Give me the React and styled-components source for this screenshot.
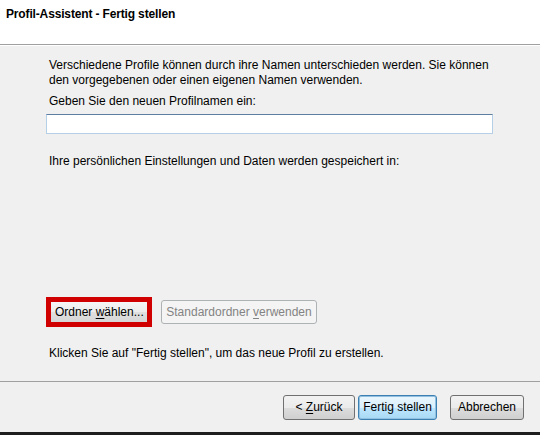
import React from 'react';
import styled, { createGlobalStyle, css } from 'styled-components';

const GlobalStyle = createGlobalStyle`
	html, body {
		margin: 0;
		padding: 0;
		background: #f0f0f0;
	}
	body {
		font-family: 'Liberation Sans', Arial, sans-serif;
		font-size: 12px;
		color: #000;
	}
`;

const Wizard = styled.div`
	width: 540px;
	height: 435px;
	display: flex;
	flex-direction: column;
	background: #f0f0f0;
	overflow: hidden;
`;

const Header = styled.div`
	height: 45px;
	flex-shrink: 0;
	background: #fff;
	border-bottom: 1px solid #a0a0a0;
	padding: 7px 0 0 6px;
	box-sizing: border-box;
`;

const Title = styled.div`
	font-weight: bold;
	line-height: 15px;
	letter-spacing: -0.15px;
`;

const Body = styled.div`
	flex: 1;
	display: flex;
	flex-direction: column;
	padding: 12px 48px 20px 49px;
	border-top: 1px solid #fff;
	box-sizing: border-box;
`;

const Text = styled.p`
	margin: ${(p) => p.$top || 0}px 0 0;
	line-height: 15px;
`;

const NameInput = styled.input`
	margin: 5px 0 0 -3px;
	width: 447px;
	height: 20px;
	box-sizing: border-box;
	background: #fff;
	border: 1px solid #b5cfe7;
	border-top-color: #5d7e9e;
	outline: none;
	font: inherit;
	padding: 0 3px;
`;

const ButtonRow = styled.div`
	margin-top: auto;
	display: flex;
	align-items: center;
	gap: 9px;
	margin-left: -3px;
`;

const Highlight = styled.div`
	border: 5px solid #d00000;
	display: flex;
`;

const Button = styled.button`
	font: inherit;
	height: ${(p) => p.$h || 25}px;
	width: ${(p) => (p.$w ? `${p.$w}px` : 'auto')};
	padding: 0 4px;
	box-sizing: border-box;
	border-radius: 3px;
	border: 1px solid #707070;
	background: linear-gradient(#f2f2f2 0%, #ebebeb 50%, #dddddd 51%, #cfcfcf 100%);
	color: #000;
	line-height: 15px;
	white-space: nowrap;
	u {
		text-decoration: underline;
		text-underline-offset: 2px;
	}
	${(p) =>
		p.$bare &&
		css`
			border: none;
			border-radius: 0;
			background: linear-gradient(#f6f6f6 0%, #ececec 50%, #e0e0e0 51%, #d6d6d6 100%);
		`}
	${(p) =>
		p.$default &&
		css`
			border-color: #3c7fb1;
			box-shadow: inset 0 0 0 1px #92c0e0;
			background: linear-gradient(#eaf6fd 0%, #d9f0fc 50%, #bee6fd 51%, #a7d9f5 100%);
		`}
	${(p) =>
		p.disabled &&
		css`
			border-color: #adb2b5;
			background: #f4f4f4;
			color: #838383;
		`}
`;

const Footer = styled.div`
	height: 51px;
	flex-shrink: 0;
	border-top: 1px solid #a0a0a0;
	box-sizing: border-box;
	display: flex;
	align-items: flex-start;
	justify-content: flex-end;
	padding: 13px 16px 0 0;
`;

const NavGroup = styled.div`
	display: flex;
	gap: 3px;
	margin-right: 13px;
`;

const FrameEdge = styled.div`
	height: 3px;
	flex-shrink: 0;
	background: #1e1e1e;
`;

export default function App() {
	return (
		<>
			<GlobalStyle />
			<Wizard>
				<Header>
					<Title>Profil-Assistent - Fertig stellen</Title>
				</Header>
				<Body>
					<Text>
						Verschiedene Profile können durch ihre Namen unterschieden werden. Sie können
						<br />
						den vorgegebenen oder einen eigenen Namen verwenden.
					</Text>
					<Text $top={6}>Geben Sie den neuen Profilnamen ein:</Text>
					<NameInput type="text" defaultValue="" />
					<Text $top={20}>Ihre persönlichen Einstellungen und Daten werden gespeichert in:</Text>
					<ButtonRow>
						<Highlight>
							<Button $bare $h={20} $w={96}>
								Ordner <u>w</u>ählen...
							</Button>
						</Highlight>
						<Button disabled $h={24} $w={156}>
							Standardordner <u>v</u>erwenden
						</Button>
					</ButtonRow>
					<Text $top={19}>Klicken Sie auf "Fertig stellen", um das neue Profil zu erstellen.</Text>
				</Body>
				<Footer>
					<NavGroup>
						<Button $w={72}>
							&lt; <u>Z</u>urück
						</Button>
						<Button $default $w={79}>
							Fertig stellen
						</Button>
					</NavGroup>
					<Button $w={74}>Abbrechen</Button>
				</Footer>
				<FrameEdge />
			</Wizard>
		</>
	);
}
